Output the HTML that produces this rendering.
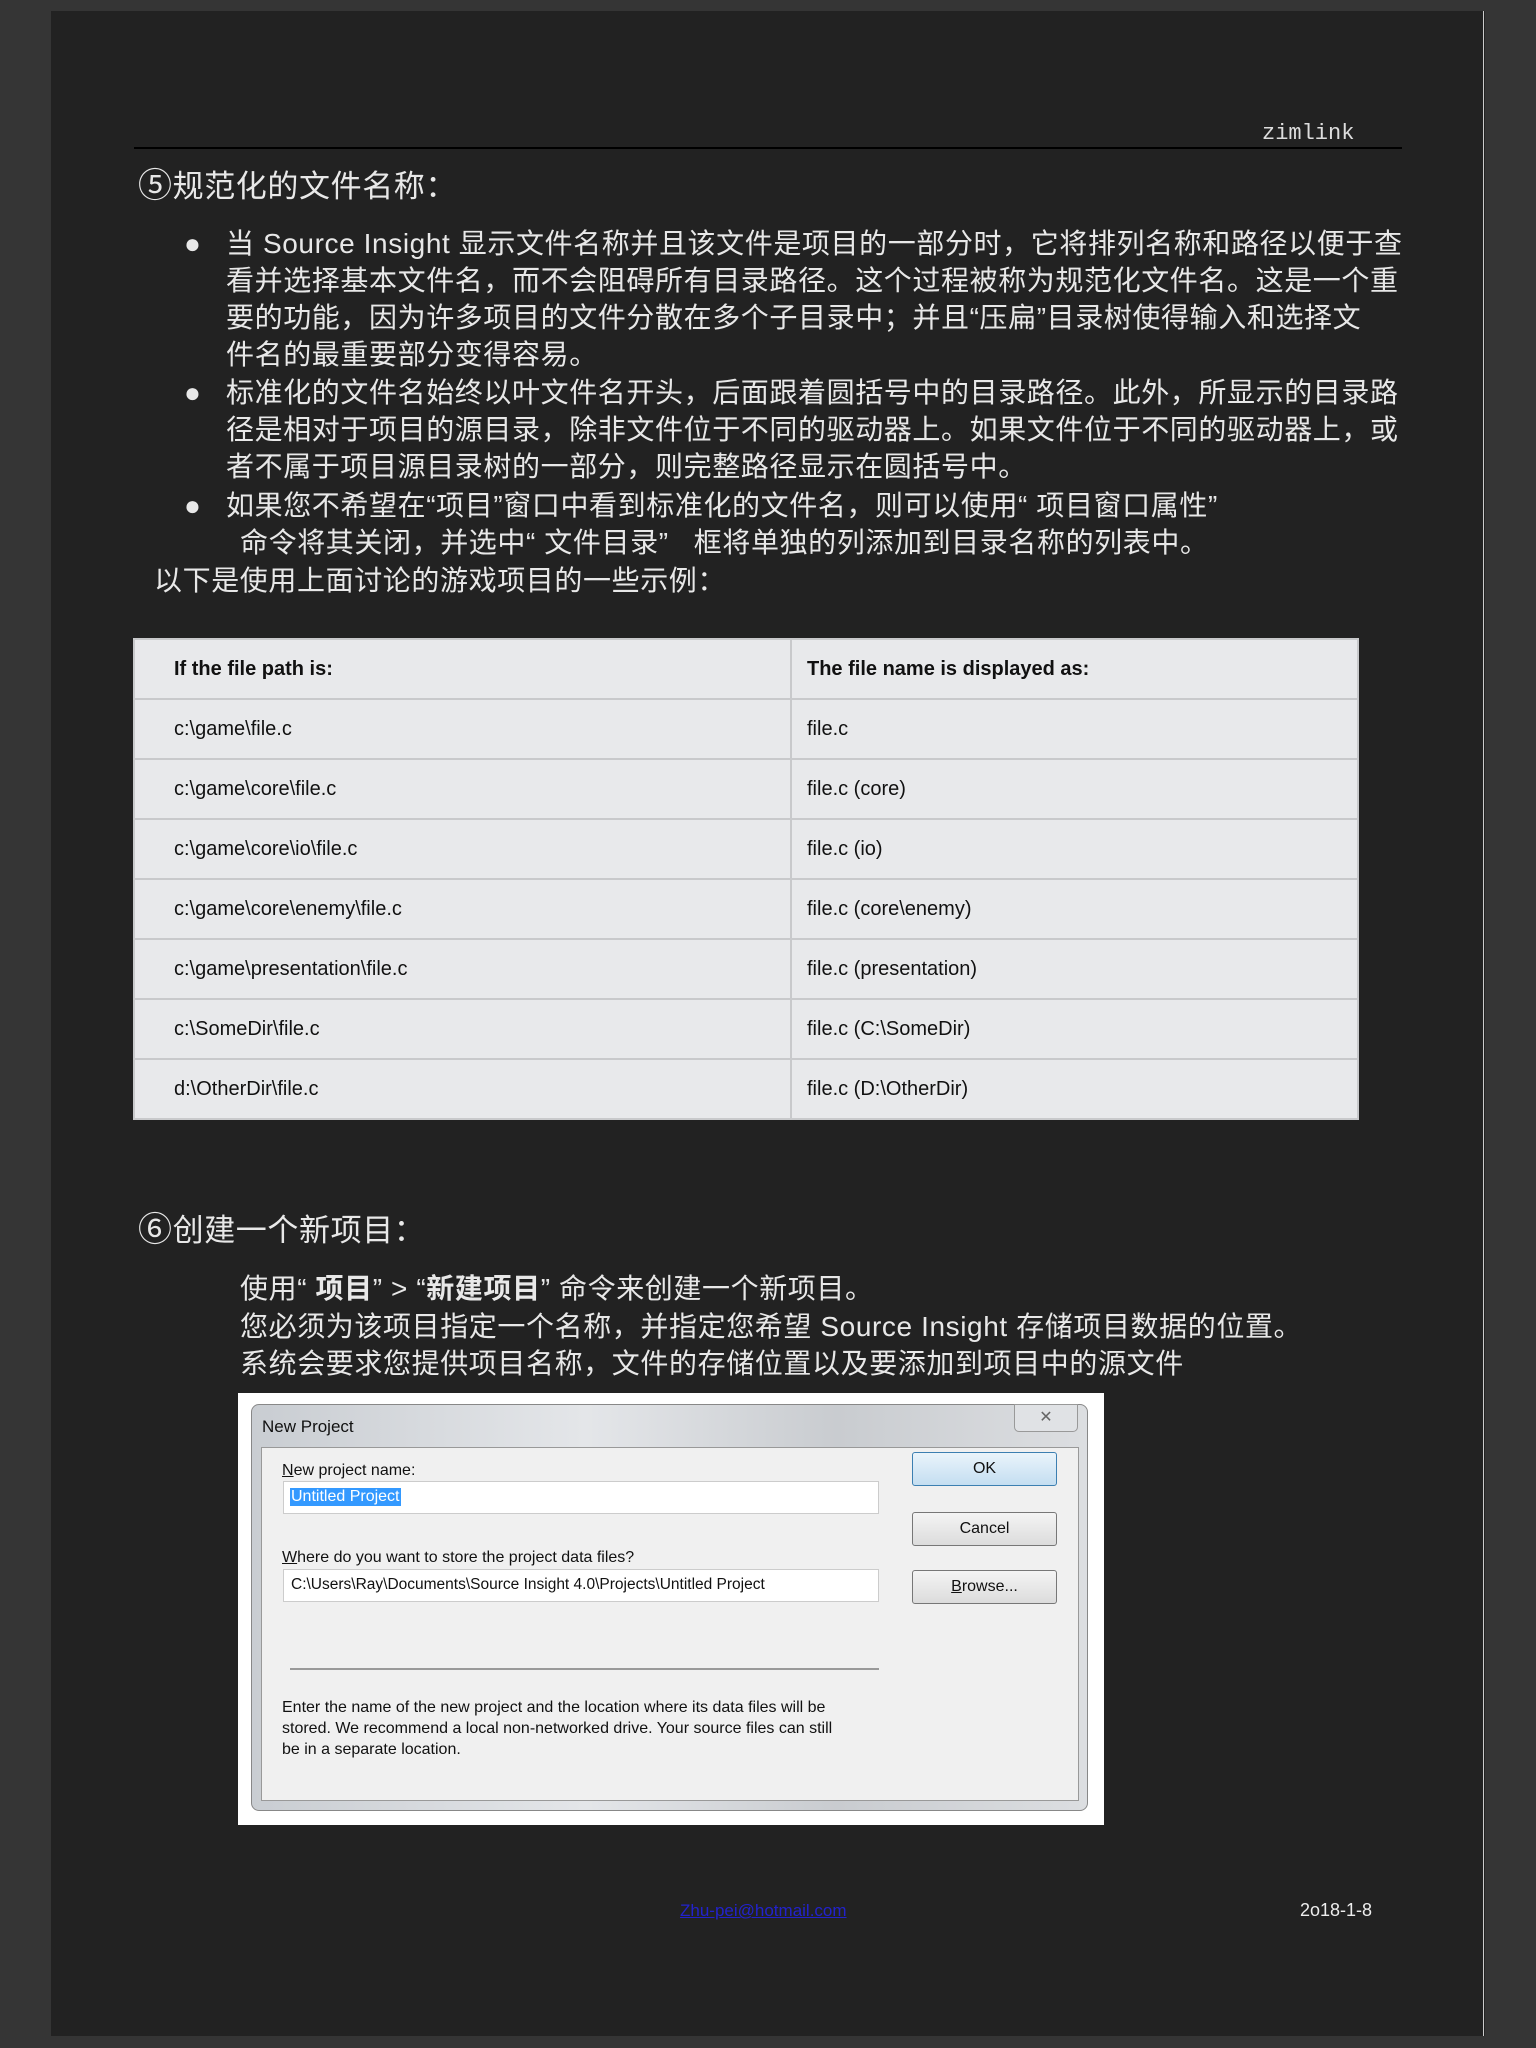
<!DOCTYPE html>
<html><head><meta charset="utf-8"><style>
*{margin:0;padding:0;box-sizing:border-box}
body{width:1536px;height:2048px;background:#353535;position:relative;overflow:hidden;font-family:"Liberation Sans","Noto Sans CJK SC",sans-serif}
.page{position:absolute;left:51px;top:11px;width:1434px;height:2025px;background:#222}
.vline{position:absolute;left:1483px;top:11px;width:1px;height:2025px;background:#ccc}
.t{position:absolute;color:#e8e8e8;white-space:nowrap;font-size:28px;line-height:37px;letter-spacing:0.6px}
.hr{position:absolute;left:134px;top:147px;width:1268px;height:2px;background:#000}
table{position:absolute;left:133px;top:638px;width:1226px;height:481px;border-collapse:collapse;background:#e8e9eb}
td{border:2px solid #c8c9cb;font-size:20px;color:#111;padding-left:39px;height:60px}
td+td{padding-left:15px}
.dlg{position:absolute;left:238px;top:1393px;width:866px;height:432px;background:#fff}
.win{position:absolute;left:13px;top:11px;width:837px;height:407px;border:1px solid #888;border-radius:8px;background:linear-gradient(90deg,#c9cdd2,#e4e6e9 40%,#c9ccd0 70%,#dcdee1)}
.cli{position:absolute;left:9px;top:42px;width:818px;height:354px;background:#f0f0f0;border:1px solid #999}
.d{position:absolute;font-size:16px;color:#111;white-space:nowrap}
.box{position:absolute;background:#fff;border:1px solid #ccc}
.btn{position:absolute;width:145px;height:34px;border:1px solid #777;border-radius:3px;background:linear-gradient(#f4f4f4,#dcdcdc);font-size:16px;text-align:center;line-height:32px;color:#111}
</style></head><body>
<div class="page"></div><div class="vline"></div>
<div class="t" style="left:1262px;top:115px;font-family:'Liberation Mono',monospace;font-size:22px;color:#ddd;letter-spacing:0">zimlink</div>
<div class="hr"></div>
<div class="t" style="left:138px;top:168px;font-size:31px"><span style="font-size:34px">⑤</span>规范化的文件名称：</div>
<div class="t" style="left:184px;top:225px">●</div>
<div class="t" style="left:226px;top:225px">当 Source Insight 显示文件名称并且该文件是项目的一部分时，它将排列名称和路径以便于查</div>
<div class="t" style="left:226px;top:262px">看并选择基本文件名，而不会阻碍所有目录路径。这个过程被称为规范化文件名。这是一个重</div>
<div class="t" style="left:226px;top:299px">要的功能，因为许多项目的文件分散在多个子目录中；并且“压扁”目录树使得输入和选择文</div>
<div class="t" style="left:226px;top:336px">件名的最重要部分变得容易。</div>
<div class="t" style="left:184px;top:374px">●</div>
<div class="t" style="left:226px;top:374px">标准化的文件名始终以叶文件名开头，后面跟着圆括号中的目录路径。此外，所显示的目录路</div>
<div class="t" style="left:226px;top:411px">径是相对于项目的源目录，除非文件位于不同的驱动器上。如果文件位于不同的驱动器上，或</div>
<div class="t" style="left:226px;top:448px">者不属于项目源目录树的一部分，则完整路径显示在圆括号中。</div>
<div class="t" style="left:184px;top:487px">●</div>
<div class="t" style="left:226px;top:487px">如果您不希望在“项目”窗口中看到标准化的文件名，则可以使用“ 项目窗口属性”</div>
<div class="t" style="left:240px;top:524px">命令将其关闭，并选中“ 文件目录”&nbsp;&nbsp; 框将单独的列添加到目录名称的列表中。</div>
<div class="t" style="left:154px;top:562px">以下是使用上面讨论的游戏项目的一些示例：</div>
<table>
<tr><td style="width:657px"><b>If the file path is:</b></td><td><b>The file name is displayed as:</b></td></tr>
<tr><td>c:\game\file.c</td><td>file.c</td></tr>
<tr><td>c:\game\core\file.c</td><td>file.c (core)</td></tr>
<tr><td>c:\game\core\io\file.c</td><td>file.c (io)</td></tr>
<tr><td>c:\game\core\enemy\file.c</td><td>file.c (core\enemy)</td></tr>
<tr><td>c:\game\presentation\file.c</td><td>file.c (presentation)</td></tr>
<tr><td>c:\SomeDir\file.c</td><td>file.c (C:\SomeDir)</td></tr>
<tr><td>d:\OtherDir\file.c</td><td>file.c (D:\OtherDir)</td></tr>
</table>
<div class="t" style="left:138px;top:1212px;font-size:31px"><span style="font-size:34px">⑥</span>创建一个新项目：</div>
<div class="t" style="left:240px;top:1270px">使用“ <b>项目</b>” > “<b>新建项目</b>” 命令来创建一个新项目。</div>
<div class="t" style="left:240px;top:1308px">您必须为该项目指定一个名称，并指定您希望 Source Insight 存储项目数据的位置。</div>
<div class="t" style="left:240px;top:1345px">系统会要求您提供项目名称，文件的存储位置以及要添加到项目中的源文件</div>
<div class="dlg"><div class="win">
<div class="d" style="left:10px;top:12px;font-size:17px">New Project</div>
<div style="position:absolute;left:762px;top:-1px;width:64px;height:28px;border:1px solid #999;border-radius:0 0 5px 5px;background:#e0e2e5;text-align:center;font-size:16px;color:#666;line-height:26px">✕</div>
<div class="cli">
<div class="d" style="left:20px;top:14px"><u>N</u>ew project name:</div>
<div class="box" style="left:21px;top:33px;width:596px;height:33px"><span style="position:absolute;left:6px;top:6px;background:#3399ff;color:#fff;font-size:16px;padding:0 1px">Untitled Project</span></div>
<div class="d" style="left:20px;top:101px"><u>W</u>here do you want to store the project data files?</div>
<div class="box" style="left:21px;top:121px;width:596px;height:33px"><span class="d" style="left:7px;top:6px;font-size:15.5px">C:\Users\Ray\Documents\Source Insight 4.0\Projects\Untitled Project</span></div>
<div style="position:absolute;left:28px;top:220px;width:589px;height:2px;background:#999"></div>
<div class="d" style="left:20px;top:249px;font-size:16px;line-height:21px">Enter the name of the new project and the location where its data files will be<br>stored. We recommend a local non-networked drive. Your source files can still<br>be in a separate location.</div>
<div class="btn" style="left:650px;top:4px;border-color:#3c7fb1;background:linear-gradient(#eaf4fb,#c4def1)">OK</div>
<div class="btn" style="left:650px;top:64px">Cancel</div>
<div class="btn" style="left:650px;top:122px"><u>B</u>rowse...</div>
</div></div></div>
<div class="t" style="left:680px;top:1892px;font-size:17px;color:#2222cc;text-decoration:underline;letter-spacing:0">Zhu-pei@hotmail.com</div>
<div class="t" style="left:1300px;top:1892px;font-size:18px;color:#eee;letter-spacing:0">2o18-1-8</div>
</body></html>
